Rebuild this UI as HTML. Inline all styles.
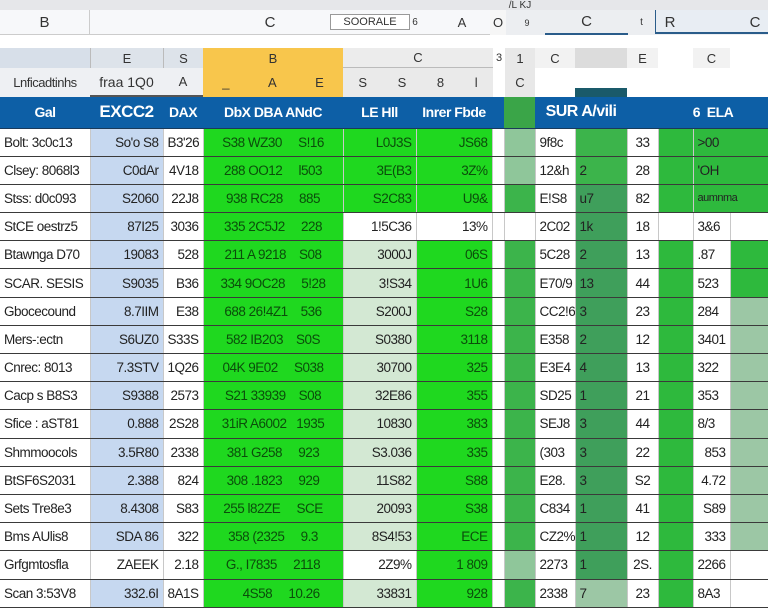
<!DOCTYPE html>
<html><head><meta charset="utf-8"><style>
*{margin:0;padding:0;box-sizing:border-box}
body{width:768px;height:614px;overflow:hidden;background:#fff;font-family:"Liberation Sans",sans-serif;position:relative}
.a{position:absolute;font-size:13px;color:#333;display:flex;align-items:center;justify-content:center}
table{position:absolute;left:0;top:97px;border-collapse:collapse;table-layout:fixed;width:768px}
td{height:28.2px;font-size:13.5px;color:#222;border-bottom:1.5px solid #3a3a3a;border-right:1px solid #c8c8c8;white-space:nowrap;overflow:hidden;padding:0 4px;letter-spacing:-0.5px;font-family:"Liberation Sans Narrow","Liberation Sans",sans-serif}
tr.h td{background:#0d5fa6;color:#fff;font-weight:bold;font-size:14px;height:31px;text-align:center;border-right:none;border-bottom:1.5px solid #1a3a5a}
.l{text-align:left}.r{text-align:right}.c{text-align:center}
.bl{background:#c6d8f0}.g{background:#1fd81f;color:#0b4d0b}.lg{background:#d3e8d3}
td.g:nth-child(4){text-align:center}
.mg{background:#3cb44b}.pg{background:#8fc69a}.dg{background:#3f9f5b}.gg{background:#2eb93d}.sg{background:#9cc7a5}.w{background:#fff}
</style></head><body>
<div style="position:absolute;left:0;top:0;width:768px;height:10px;background:#e6e7ea"></div>
<div class="a" style="left:490px;top:0;width:60px;height:10px;font-size:10px">/L KJ</div>
<div style="position:absolute;left:0;top:10px;width:490px;height:25px;background:#f7f8fa;border-bottom:1px solid #ccc"></div>
<div class="a" style="left:0;top:10px;width:90px;height:25px;font-size:15px;border-right:1px solid #ccc">B</div>
<div class="a" style="left:240px;top:10px;width:60px;height:25px;font-size:15px">C</div>
<div class="a" style="left:330px;top:14px;width:80px;height:16px;font-size:11px;border:1px solid #999;background:#fff">SOORALE</div>
<div class="a" style="left:405px;top:10px;width:20px;height:25px;font-size:10px">6</div>
<div class="a" style="left:452px;top:10px;width:20px;height:25px">A</div>
<div style="position:absolute;left:490px;top:10px;width:278px;height:25px;background:#eceef1"></div>
<div class="a" style="left:490px;top:10px;width:16px;height:25px;background:#f6f6f6">O</div>
<div class="a" style="left:512px;top:10px;width:30px;height:25px;font-size:9px">9</div>
<div class="a" style="left:545px;top:10px;width:83px;height:25px;font-size:15px;border-bottom:2px solid #2a5c8a">C</div>
<div class="a" style="left:628px;top:10px;width:27px;height:25px;font-size:10px">t</div>
<div style="position:absolute;left:655px;top:10px;width:113px;height:24px;border-left:1px solid #2a5c8a;border-bottom:2px solid #2a5c8a;background:#e8edf3"></div>
<div class="a" style="left:660px;top:10px;width:20px;height:25px;font-size:15px">R</div>
<div class="a" style="left:745px;top:10px;width:20px;height:25px;font-size:15px">C</div>
<div style="position:absolute;left:0;top:48px;width:90px;height:20px;background:#d7dfe9"></div>
<div class="a" style="left:90px;top:48px;width:73px;height:20px;background:#dde3ea;border-left:1px solid #bbb">E</div>
<div class="a" style="left:163px;top:48px;width:40px;height:20px;background:#dde3ea;border-left:1px solid #bbb">S</div>
<div class="a" style="left:203px;top:48px;width:140px;height:20px;background:#f8c64c">B</div>
<div class="a" style="left:343px;top:48px;width:150px;height:20px;background:#ececec;border-bottom:1px solid #bbb">C</div>
<div class="a" style="left:493px;top:48px;width:12px;height:20px;font-size:11px">3</div>
<div class="a" style="left:505px;top:48px;width:30px;height:20px;background:#e8e8e8">1</div>
<div class="a" style="left:535px;top:48px;width:40px;height:20px;background:#f2f2f2">C</div>
<div class="a" style="left:575px;top:48px;width:52px;height:20px;background:#dcdcdc"></div>
<div class="a" style="left:627px;top:48px;width:31px;height:20px;background:#f2f2f2">E</div>
<div class="a" style="left:693px;top:48px;width:37px;height:20px;background:#f2f2f2">C</div>
<div class="a" style="left:0;top:68px;width:90px;height:29px;background:#eef0f3;font-size:13px;letter-spacing:-0.5px">Lnficadtinhs</div>
<div class="a" style="left:90px;top:68px;width:73px;height:29px;background:#eef0f3;font-size:14px;border-bottom:2px solid #555">fraa 1Q0</div>
<div class="a" style="left:163px;top:68px;width:40px;height:29px;background:#eef0f3;border-bottom:2px solid #555">A</div>
<div class="a" style="left:203px;top:68px;width:140px;height:29px;background:#f8c64c;justify-content:space-around">_ <span>A</span><span>E</span></div>
<div class="a" style="left:343px;top:68px;width:150px;height:29px;background:#eaeaea;justify-content:space-around"><span>S</span><span>S</span><span>8</span><span>l</span></div>
<div class="a" style="left:505px;top:68px;width:30px;height:29px;background:#e8e8e8">C</div>
<div style="position:absolute;left:575px;top:88px;width:52px;height:9px;background:#1a5a6a"></div>
<table>
<colgroup><col style="width:90px"><col style="width:73px"><col style="width:40px"><col style="width:140px"><col style="width:73px"><col style="width:76px"><col style="width:12px"><col style="width:31px"><col style="width:40px"><col style="width:52px"><col style="width:31px"><col style="width:35px"><col style="width:37px"><col style="width:38px"></colgroup>
<tr class="h"><td>Gal</td><td style="font-size:17px">EXCC2</td><td>DAX</td><td>DbX DBA ANdC</td><td>LE Hll</td><td>Inrer Fbde</td><td class="w"></td><td style="background:#3aa548"></td><td colspan="2" class="l" style="font-size:16px">SUR A/vili</td><td class="w"></td><td colspan="3">6 &nbsp;ELA</td></tr>
<tr><td class="l">Bolt: 3c0c13</td><td class="r bl">So'o S8</td><td class="r">B3'26</td><td class="g">S38 WZ30 &nbsp;&nbsp;&nbsp; S!16</td><td class="r g">L0J3S</td><td class="r g">JS68</td><td class="w"></td><td class="pg"></td><td class="l">9f8c</td><td class="mg"></td><td class="c">33</td><td class="gg"></td><td class="gg l" colspan="2">&gt;00</td></tr>
<tr><td class="l">Clsey: 8068l3</td><td class="r bl">C0dAr</td><td class="r">4V18</td><td class="g">288 OO12 &nbsp;&nbsp;&nbsp; l503</td><td class="r g">3E(B3</td><td class="r g">3Z%</td><td class="w"></td><td class="pg"></td><td class="l">12&amp;h</td><td class="mg">2</td><td class="c">28</td><td class="gg"></td><td class="gg l" colspan="2">'OH</td></tr>
<tr><td class="l">Stss: d0c093</td><td class="r bl">S2060</td><td class="r">22J8</td><td class="g">938 RC28 &nbsp;&nbsp;&nbsp; 885</td><td class="r g">S2C83</td><td class="r g">U9&amp;</td><td class="w"></td><td class="mg"></td><td class="l">E!S8</td><td class="dg">u7</td><td class="c">82</td><td class="gg"></td><td class="gg l" colspan="2" style="font-size:11px">aumnma</td></tr>
<tr><td class="l">StCE oestrz5</td><td class="r bl">87I25</td><td class="r">3036</td><td class="g">335 2C5J2 &nbsp;&nbsp;&nbsp; 228</td><td class="r w">1!5C36</td><td class="r w">13%</td><td class="w"></td><td class="w"></td><td class="l">2C02</td><td class="dg">1k</td><td class="c">18</td><td class="w"></td><td class="l">3&amp;6</td><td class="w"></td></tr>
<tr><td class="l">Btawnga D70</td><td class="r bl">19083</td><td class="r">528</td><td class="g">211 A 9218 &nbsp;&nbsp; S08</td><td class="r lg">3000J</td><td class="r g">06S</td><td class="w"></td><td class="mg"></td><td class="l">5C28</td><td class="dg">2</td><td class="c">13</td><td class="gg"></td><td class="l">.87</td><td class="gg"></td></tr>
<tr><td class="l">SCAR. SESIS</td><td class="r bl">S9035</td><td class="r">B36</td><td class="g">334 9OC28 &nbsp;&nbsp;&nbsp; 5!28</td><td class="r lg">3!S34</td><td class="r g">1U6</td><td class="w"></td><td class="mg"></td><td class="l">E70/9</td><td class="dg">13</td><td class="c">44</td><td class="gg"></td><td class="l">523</td><td class="gg"></td></tr>
<tr><td class="l">Gbocecound</td><td class="r bl">8.7IIM</td><td class="r">E38</td><td class="g">688 26!4Z1 &nbsp;&nbsp; 536</td><td class="r lg">S200J</td><td class="r g">S28</td><td class="w"></td><td class="mg"></td><td class="l">CC2!6</td><td class="dg">3</td><td class="c">23</td><td class="gg"></td><td class="l">284</td><td class="sg"></td></tr>
<tr><td class="l">Mers-:ectn</td><td class="r bl">S6UZ0</td><td class="r">S33S</td><td class="g">582 IB203 &nbsp;&nbsp; S0S</td><td class="r lg">S0380</td><td class="r g">3118</td><td class="w"></td><td class="mg"></td><td class="l">E358</td><td class="dg">2</td><td class="c">12</td><td class="gg"></td><td class="l">3401</td><td class="sg"></td></tr>
<tr><td class="l">Cnrec: 8013</td><td class="r bl">7.3STV</td><td class="r">1Q26</td><td class="g">04K 9E02 &nbsp;&nbsp;&nbsp; S038</td><td class="r lg">30700</td><td class="r g">325</td><td class="w"></td><td class="mg"></td><td class="l">E3E4</td><td class="dg">4</td><td class="c">13</td><td class="gg"></td><td class="l">322</td><td class="sg"></td></tr>
<tr><td class="l">Cacp s B8S3</td><td class="r bl">S9388</td><td class="r">2573</td><td class="g">S21 33939 &nbsp;&nbsp; S08</td><td class="r lg">32E86</td><td class="r g">355</td><td class="w"></td><td class="mg"></td><td class="l">SD25</td><td class="dg">1</td><td class="c">21</td><td class="gg"></td><td class="l">353</td><td class="sg"></td></tr>
<tr><td class="l">Sfice : aST81</td><td class="r bl">0.888</td><td class="r">2S28</td><td class="g">31iR A6002 &nbsp; 1935</td><td class="r lg">10830</td><td class="r g">383</td><td class="w"></td><td class="mg"></td><td class="l">SEJ8</td><td class="dg">3</td><td class="c">44</td><td class="gg"></td><td class="l">8/3</td><td class="sg"></td></tr>
<tr><td class="l">Shmmoocols</td><td class="r bl">3.5R80</td><td class="r">2338</td><td class="g">381 G258 &nbsp;&nbsp;&nbsp; 923</td><td class="r lg">S3.036</td><td class="r g">335</td><td class="w"></td><td class="mg"></td><td class="l">(303</td><td class="dg">3</td><td class="c">22</td><td class="gg"></td><td class="r">853</td><td class="sg"></td></tr>
<tr><td class="l">BtSF6S2031</td><td class="r bl">2.388</td><td class="r">824</td><td class="g">308 .1823 &nbsp;&nbsp;&nbsp; 929</td><td class="r lg">11S82</td><td class="r g">S88</td><td class="w"></td><td class="mg"></td><td class="l">E28.</td><td class="dg">3</td><td class="c">S2</td><td class="gg"></td><td class="r">4.72</td><td class="sg"></td></tr>
<tr><td class="l">Sets Tre8e3</td><td class="r bl">8.4308</td><td class="r">S83</td><td class="g">255 l82ZE &nbsp;&nbsp;&nbsp; SCE</td><td class="r lg">20093</td><td class="r g">S38</td><td class="w"></td><td class="mg"></td><td class="l">C834</td><td class="dg">1</td><td class="c">41</td><td class="gg"></td><td class="r">S89</td><td class="sg"></td></tr>
<tr><td class="l">Bms AUlis8</td><td class="r bl">SDA 86</td><td class="r">322</td><td class="g">358 (2325 &nbsp;&nbsp;&nbsp; 9.3</td><td class="r lg">8S4!53</td><td class="r g">ECE</td><td class="w"></td><td class="mg"></td><td class="l">CZ2%</td><td class="dg">1</td><td class="c">12</td><td class="gg"></td><td class="r">333</td><td class="sg"></td></tr>
<tr><td class="l">Grfgmtosfla</td><td class="r w">ZAEEK</td><td class="r">2.18</td><td class="g">G., I7835 &nbsp;&nbsp;&nbsp; 2118</td><td class="r w">2Z9%</td><td class="r g">1 809</td><td class="w"></td><td class="pg"></td><td class="l">2273</td><td class="dg">1</td><td class="c">2S.</td><td class="gg"></td><td class="l">2266</td><td class="w"></td></tr>
<tr><td class="l">Scan 3:53V8</td><td class="r bl">332.6I</td><td class="r">8A1S</td><td class="g">&nbsp;&nbsp;&nbsp;&nbsp; 4S58 &nbsp;&nbsp;&nbsp; 10.26</td><td class="r lg">33831</td><td class="r g">928</td><td class="w"></td><td class="mg"></td><td class="l">2338</td><td class="sg">7</td><td class="c">23</td><td class="gg"></td><td class="l">8A3</td><td class="w"></td></tr>
</table>
</body></html>
